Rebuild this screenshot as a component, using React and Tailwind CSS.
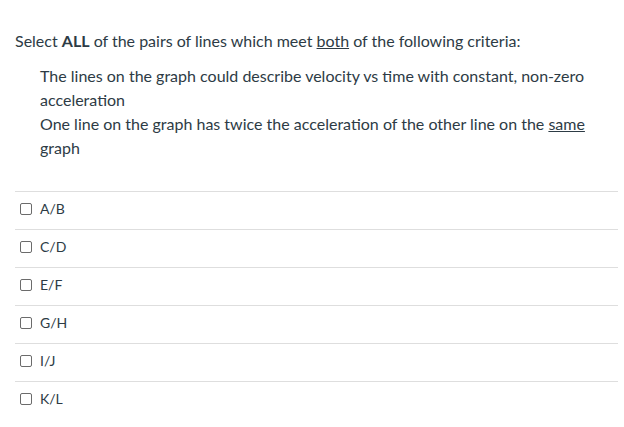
const options = ["A/B", "C/D", "E/F", "G/H", "I/J", "K/L"];

export default function App() {
  return (
    <div className="min-h-[427px] bg-white pl-[15px] pr-[6px] pt-[29px] font-['Lato','Liberation_Sans',sans-serif] text-[#2d3b45]">
      <p className="text-base leading-6">
        Select <strong className="font-bold">ALL</strong> of the pairs of lines which meet <u>both</u> of the following criteria:
      </p>
      <div className="mt-[11px] pl-[25px] pr-[20px] text-base leading-6">
        <p>The lines on the graph could describe velocity vs time with constant, non-zero acceleration</p>
        <p>
          One line on the graph has twice the acceleration of the other line on the <u>same</u> graph
        </p>
      </div>

      <div className="mt-[31px]">
        {options.map(opt => (
          <div key={opt} className="flex h-[38px] items-center gap-2 border-t border-[#dedede] pb-[3px] pl-[5px]">
            <span className="h-[12px] w-[12px] rounded-[2px] border border-[#6b6b6b] bg-white"></span>
            <span className="text-sm leading-4">{opt}</span>
          </div>
        ))}
      </div>
    </div>
  );
}
